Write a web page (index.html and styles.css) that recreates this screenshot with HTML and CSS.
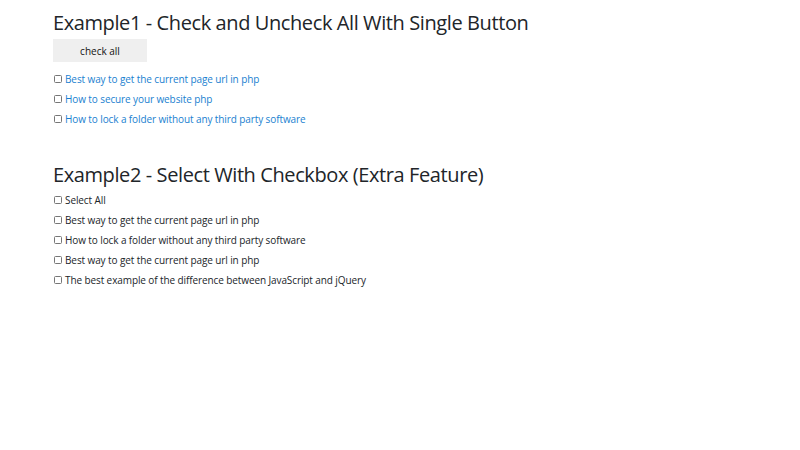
FILE: index.html
```html
<!DOCTYPE html>
<html>
<head>
<meta charset="utf-8">
<link rel="stylesheet" href="styles.css">
</head>
<body>
<div class="page">
  <section class="ex1">
    <h1 class="title">Example1 - Check and Uncheck All With Single Button</h1>
    <button class="btn" type="button">check all</button>
    <ul class="list">
      <li class="row"><input class="cb" type="checkbox"><a class="link" href="#">Best way to get the current page url in php</a></li>
      <li class="row"><input class="cb" type="checkbox"><a class="link" href="#">How to secure your website php</a></li>
      <li class="row"><input class="cb" type="checkbox"><a class="link" href="#">How to lock a folder without any third party software</a></li>
    </ul>
  </section>
  <section class="ex2">
    <h1 class="title">Example2 - Select With Checkbox (Extra Feature)</h1>
    <div class="row first"><input class="cb" type="checkbox"><span class="txt">Select All</span></div>
    <ul class="list">
      <li class="row"><input class="cb" type="checkbox"><span class="txt">Best way to get the current page url in php</span></li>
      <li class="row"><input class="cb" type="checkbox"><span class="txt">How to lock a folder without any third party software</span></li>
      <li class="row"><input class="cb" type="checkbox"><span class="txt">Best way to get the current page url in php</span></li>
      <li class="row"><input class="cb" type="checkbox"><span class="txt">The best example of the difference between JavaScript and jQuery</span></li>
    </ul>
  </section>
</div>
</body>
</html>
```
FILE: styles.css
```css
html, body {
  margin: 0;
  padding: 0;
  background: #ffffff;
}
body {
  font-family: "Open Sans", "Noto Sans", sans-serif;
  color: #212529;
}
.page {
  padding: 9px 0 0 53px;
}
.title {
  margin: 0;
  font-weight: 400;
  font-size: 20px;
  letter-spacing: -0.4px;
  line-height: 28px;
  color: #212529;
}
.btn {
  display: block;
  width: 94px;
  height: 23px;
  margin-top: 2px;
  border: none;
  background: #efefef;
  font-family: inherit;
  font-size: 10px;
  color: #111;
  padding: 0;
}
.list {
  list-style: none;
  margin: 0;
  padding: 0;
}
.ex1 .list {
  margin-top: 7px;
}
.row {
  display: flex;
  align-items: center;
  height: 20px;
  font-size: 10px;
  letter-spacing: -0.1px;
}
.cb {
  width: 8px;
  height: 8px;
  margin: 0 3px 0 1px;
  appearance: none;
  border: 1px solid #767676;
  border-radius: 1.5px;
  background: #fff;
}
.link {
  color: #1a7fd0;
  text-decoration: none;
}
.txt {
  color: #212529;
}
.ex2 {
  margin-top: 32px;
}
.ex2 .first {
  height: 21px;
}
```
